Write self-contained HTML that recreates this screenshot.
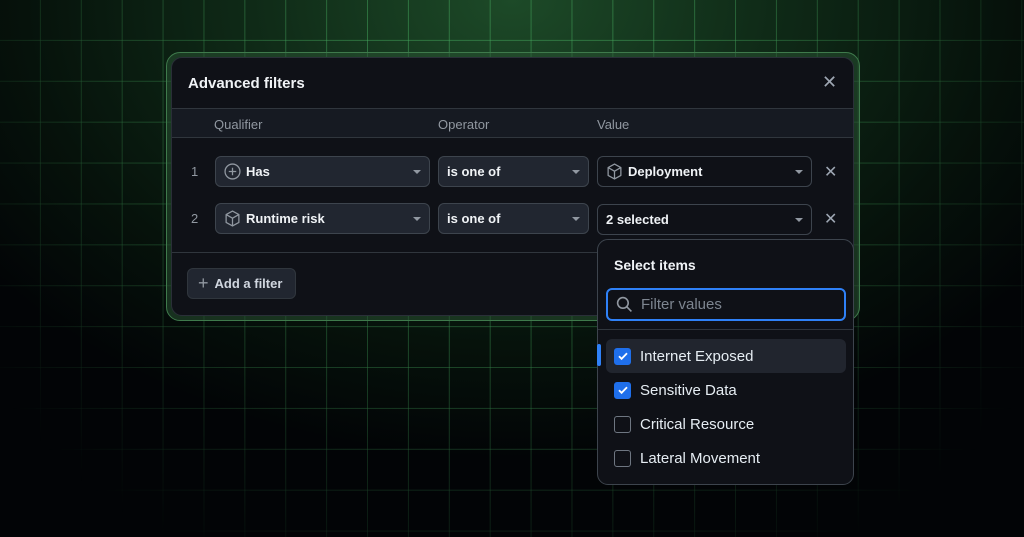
<!DOCTYPE html>
<html><head><style>
*{box-sizing:border-box;margin:0;padding:0}
body{width:1024px;height:537px;overflow:hidden;font-family:"Liberation Sans",sans-serif;background:#020406;position:relative}
.bg{position:absolute;inset:0;background:radial-gradient(ellipse 650px 460px at 512px 0px,#1d4a28 0%,#0f2a17 40%,#06120b 75%,#020406 100%)}
.grid{position:absolute;inset:0;background-image:linear-gradient(to right,rgba(70,170,95,.5) 1px,transparent 1px),linear-gradient(to bottom,rgba(70,170,95,.5) 1px,transparent 1px);background-size:40.9px 40.9px;background-position:-1px -1px;-webkit-mask-image:radial-gradient(ellipse 620px 560px at 512px 80px,#000 25%,rgba(0,0,0,.55) 65%,transparent 100%)}
.frame{position:absolute;left:166px;top:52px;width:694px;height:269px;border-radius:14px;background:rgba(40,80,50,.55);border:1px solid #3f7a4c}
.modal{position:absolute;left:171px;top:57px;width:683px;height:259px;border-radius:11px;background:#0f1117;border:1px solid #2a2f38;overflow:hidden}
.title{position:absolute;left:16px;top:17px;color:#f0f3f6;font-size:15px;font-weight:bold}
.x{position:absolute;color:#9ea7b3;font-size:18px}
.hdr{position:absolute;left:0;top:50px;width:100%;height:30px;background:#161a22;border-top:1px solid #30363d;border-bottom:1px solid #30363d;color:#9198a1;font-size:13px}
.hdr span{position:absolute;top:8px}
.num{position:absolute;color:#9198a1;font-size:13px}
.sel{position:absolute;height:31px;border:1px solid #3d444d;border-radius:6px;background:#212630;color:#f0f3f6;font-size:13px;font-weight:bold;display:flex;align-items:center;padding-left:8px;gap:5px}
.sel.v{background:#0f1117}
.car{position:absolute;right:8px;top:13px;width:0;height:0;border-left:4px solid transparent;border-right:4px solid transparent;border-top:4px solid #9198a1}
.foot{position:absolute;left:0;top:194px;width:100%;border-top:1px solid #30363d}
.btn{position:absolute;left:15px;top:210px;width:109px;height:31px;border:1px solid #30363d;border-radius:6px;background:#212630;color:#d1d7e0;font-size:13px;font-weight:bold;display:flex;align-items:center;padding-left:10px;gap:6px}
.dd{position:absolute;left:597px;top:239px;width:257px;height:246px;border:1px solid #3d444d;border-radius:11px;background:#0f1117}
.dd h3{position:absolute;left:16px;top:17px;color:#f0f3f6;font-size:14px;font-weight:bold}
.inp{position:absolute;left:8px;top:48px;width:240px;height:33px;border:2px solid #2f81f7;border-radius:6px;display:flex;align-items:center;padding-left:8px;gap:8px;color:#7d8590;font-size:15px}
.div{position:absolute;left:0;top:89px;width:100%;border-top:1px solid #30363d}
.it{position:absolute;left:8px;width:240px;height:34px;border-radius:6px;display:flex;align-items:center;padding-left:8px;gap:9px;color:#e6edf3;font-size:15px}
.cb{width:17px;height:17px;border-radius:3px;border:1.5px solid #6e7681;display:flex;align-items:center;justify-content:center}
.cb.on{background:#1f6feb;border-color:#1f6feb}
</style></head><body>
<div class="bg"></div><div class="grid"></div>
<div class="frame"></div>
<div class="modal">
<div class="title">Advanced filters</div>
<div class="x" style="left:650px;top:14px">✕</div>
<div class="hdr"><span style="left:42px">Qualifier</span><span style="left:266px">Operator</span><span style="left:425px">Value</span></div>
<div class="num" style="left:19px;top:106px">1</div>
<div class="num" style="left:19px;top:153px">2</div>
<div class="sel" style="left:43px;top:98px;width:215px"><svg width="17" height="17" viewBox="0 0 16 16" fill="none" stroke="#9198a1" stroke-width="1.2"><circle cx="8" cy="8" r="7"/><path d="M8 4.5v7M4.5 8h7"/></svg>Has<div class="car"></div></div>
<div class="sel" style="left:43px;top:145px;width:215px"><svg width="17" height="17" viewBox="0 0 16 16" fill="none" stroke="#9198a1" stroke-width="1.2" stroke-linejoin="round"><path d="M8 1l6 3.3v7.4L8 15l-6-3.3V4.3z M2 4.3l6 3.4 6-3.4 M8 7.7V15"/></svg>Runtime risk<div class="car"></div></div>
<div class="sel" style="left:266px;top:98px;width:151px">is one of<div class="car"></div></div>
<div class="sel" style="left:266px;top:145px;width:151px">is one of<div class="car"></div></div>
<div class="sel v" style="left:425px;top:98px;width:215px"><svg width="17" height="17" viewBox="0 0 16 16" fill="none" stroke="#9198a1" stroke-width="1.2" stroke-linejoin="round"><path d="M8 1l6 3.3v7.4L8 15l-6-3.3V4.3z M2 4.3l6 3.4 6-3.4 M8 7.7V15"/></svg>Deployment<div class="car"></div></div>
<div class="sel v" style="left:425px;top:146px;width:215px">2 selected<div class="car"></div></div>
<div class="x" style="left:652px;top:104px;font-size:16px">✕</div>
<div class="x" style="left:652px;top:151px;font-size:16px">✕</div>
<div class="foot"></div>
<div class="btn"><span style="font-size:18px;font-weight:normal;color:#9198a1">+</span>Add a filter</div>
</div>
<div class="dd">
<h3>Select items</h3>
<div class="inp"><svg width="17" height="17" viewBox="0 0 16 16" fill="none" stroke="#9198a1" stroke-width="1.5"><circle cx="6.5" cy="6.5" r="5"/><path d="M10.2 10.2L14.5 14.5"/></svg>Filter values</div>
<div class="div"></div>
<div style="position:absolute;left:-1px;top:104px;width:4px;height:22px;background:#2f81f7;border-radius:2px"></div>
<div class="it" style="top:99px;background:#21252e"><div class="cb on"><svg width="12" height="12" viewBox="0 0 12 12" fill="none" stroke="#fff" stroke-width="1.8"><path d="M2 6.2l2.6 2.6L10 3.3"/></svg></div>Internet Exposed</div>
<div class="it" style="top:133px"><div class="cb on"><svg width="12" height="12" viewBox="0 0 12 12" fill="none" stroke="#fff" stroke-width="1.8"><path d="M2 6.2l2.6 2.6L10 3.3"/></svg></div>Sensitive Data</div>
<div class="it" style="top:167px"><div class="cb"></div>Critical Resource</div>
<div class="it" style="top:201px"><div class="cb"></div>Lateral Movement</div>
</div>
</body></html>
